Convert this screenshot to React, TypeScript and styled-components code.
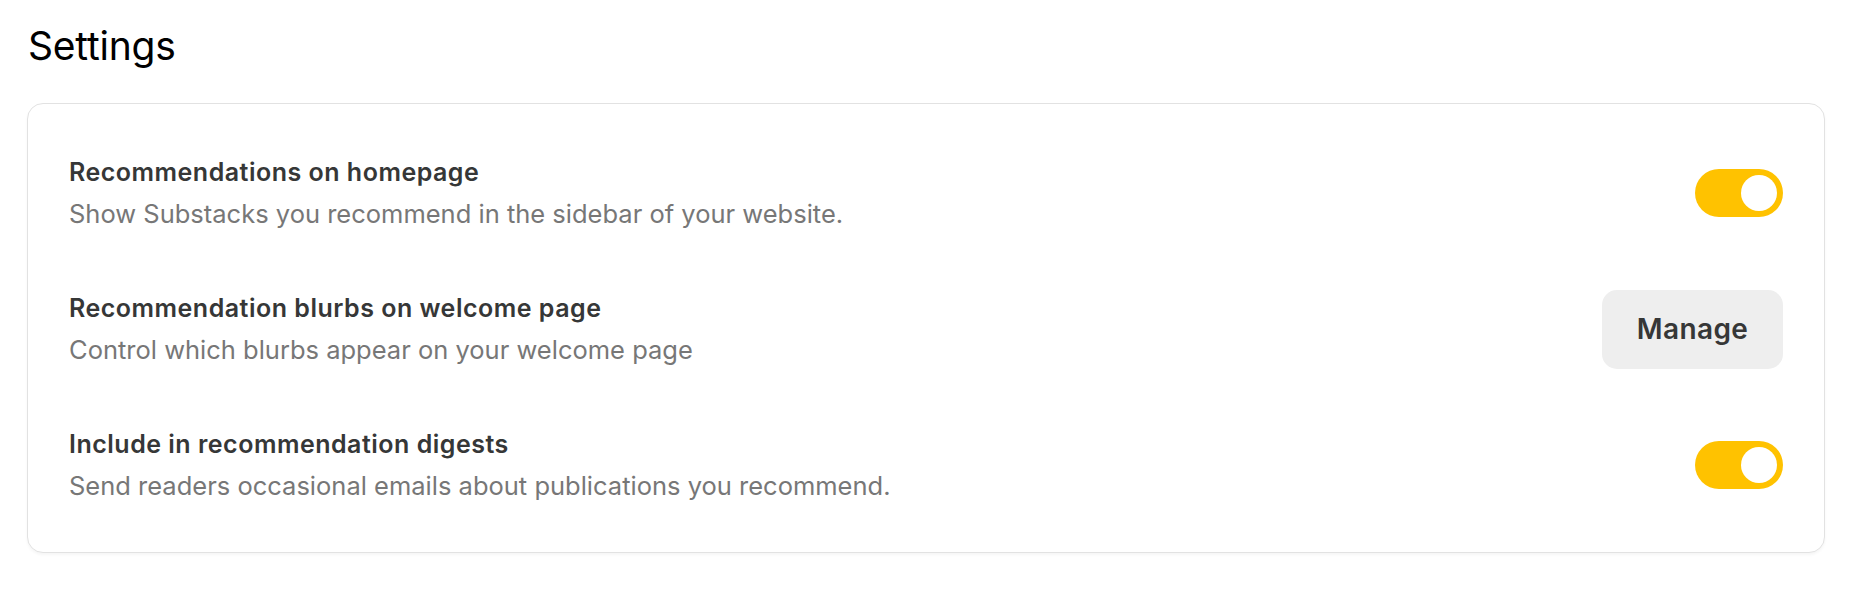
import { useState } from "react";
import styled, { createGlobalStyle } from "styled-components";

const GlobalStyle = createGlobalStyle`
  * {
    box-sizing: border-box;
  }
  body {
    margin: 0;
    background: #ffffff;
    font-family: Inter, "Noto Sans", "Liberation Sans", sans-serif;
    -webkit-font-smoothing: antialiased;
  }
`;

const Page = styled.div`
  padding: 22px 39px 40px 27px;
`;

const Heading = styled.h1`
  margin: 0 0 33px 1px;
  font-size: 39px;
  line-height: 48px;
  font-weight: 400;
  color: #000;
  letter-spacing: -0.2px;
`;

const Card = styled.div`
  border: 1px solid #e2e2e2;
  border-radius: 16px;
  padding: 21px 41px 19px;
  background: #fff;
  box-shadow: 0 2px 3px rgba(0, 0, 0, 0.04);
`;

const Row = styled.div`
  display: flex;
  align-items: center;
  justify-content: space-between;
  min-height: 136px;
`;

const Text = styled.div`
  display: flex;
  flex-direction: column;
  gap: 11px;
`;

const Title = styled.div`
  font-size: 25px;
  line-height: 30px;
  font-weight: 600;
  letter-spacing: 0.5px;
  color: #363737;
`;

const Description = styled.div`
  font-size: 25.5px;
  line-height: 32px;
  font-weight: 400;
  color: #777777;
`;

const Toggle = styled.button<{ $on: boolean }>`
  width: 88px;
  height: 48px;
  border: none;
  border-radius: 24px;
  padding: 6px;
  display: flex;
  justify-content: ${(p) => (p.$on ? "flex-end" : "flex-start")};
  background: ${(p) => (p.$on ? "#ffc200" : "#dcdcdc")};
  cursor: pointer;
  span {
    width: 36px;
    height: 36px;
    border-radius: 50%;
    background: #fff;
  }
`;

const ManageButton = styled.button`
  width: 181px;
  height: 79px;
  border: none;
  border-radius: 15px;
  background: #eeeeee;
  color: #363737;
  font-family: inherit;
  font-size: 28px;
  font-weight: 600;
  letter-spacing: 0.4px;
  cursor: pointer;
`;

function App() {
  const [homepage, setHomepage] = useState(true);
  const [digests, setDigests] = useState(true);
  return (
    <>
      <GlobalStyle />
      <Page>
        <Heading>Settings</Heading>
        <Card>
          {/* homepage */}
          <Row>
            <Text>
              <Title>Recommendations on homepage</Title>
              <Description>
                Show Substacks you recommend in the sidebar of your website.
              </Description>
            </Text>
            <Toggle $on={homepage} onClick={() => setHomepage(!homepage)}>
              <span />
            </Toggle>
          </Row>
          {/* blurbs */}
          <Row>
            <Text>
              <Title>Recommendation blurbs on welcome page</Title>
              <Description>
                Control which blurbs appear on your welcome page
              </Description>
            </Text>
            <ManageButton>Manage</ManageButton>
          </Row>
          {/* digests */}
          <Row>
            <Text>
              <Title>Include in recommendation digests</Title>
              <Description>
                Send readers occasional emails about publications you recommend.
              </Description>
            </Text>
            <Toggle $on={digests} onClick={() => setDigests(!digests)}>
              <span />
            </Toggle>
          </Row>
        </Card>
      </Page>
    </>
  );
}

export default App;
